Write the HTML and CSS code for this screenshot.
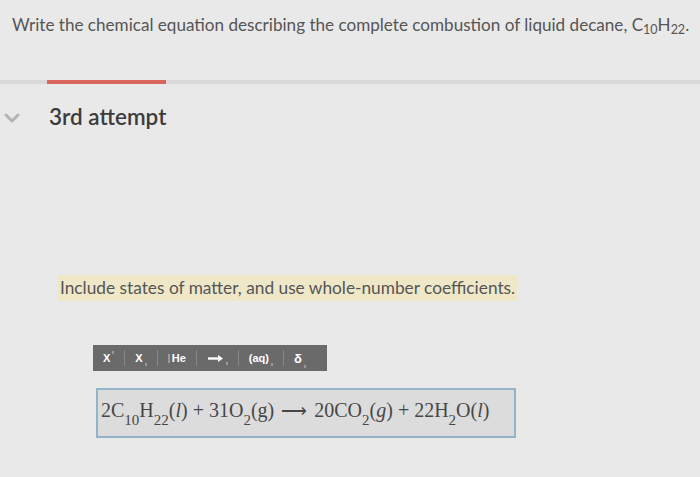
FILE: index.html
```html
<!DOCTYPE html>
<html>
<head>
<meta charset="utf-8">
<link rel="stylesheet" href="styles.css">
</head>
<body>
<div class="page">
  <div class="question">Write the chemical equation describing the complete combustion of liquid decane, C<sub>10</sub>H<sub>22</sub>.</div>
  <div class="progress"><div class="progress-fill"></div></div>
  <div class="attempt">
    <svg class="chev" width="16" height="10" viewBox="0 0 16 10"><path d="M2 2 L8 8 L14 2" fill="none" stroke="#b4b4b4" stroke-width="3" stroke-linecap="round" stroke-linejoin="round"/></svg>
    <span class="attempt-title">3rd attempt</span>
  </div>
  <div class="instr-row"><span class="instr">Include states of matter, and use whole-number coefficients.</span></div>
  <div class="toolbar">
    <span class="tb-item">X<span class="box sup"></span></span>
    <span class="sep"></span>
    <span class="tb-item">X<span class="box sub"></span></span>
    <span class="sep"></span>
    <span class="tb-item"><span class="box pre"></span>He</span>
    <span class="sep"></span>
    <span class="tb-item"><svg width="17" height="9" viewBox="0 0 17 9"><path d="M1 4.5 H13" stroke="#fff" stroke-width="2.4"/><path d="M11 1 L16 4.5 L11 8 Z" fill="#fff"/></svg><span class="box sub"></span></span>
    <span class="sep"></span>
    <span class="tb-item">(aq)<span class="box sub"></span></span>
    <span class="sep"></span>
    <span class="tb-item delta">δ<span class="box sub"></span></span>
  </div>
  <div class="eq-box">
    <span class="eq">2C<sub>10</sub>H<sub>22</sub>(<i>l</i>) + 31O<sub>2</sub>(g) <span class="yields">&#10230;</span> 20CO<sub>2</sub>(<i>g</i>) + 22H<sub>2</sub>O(<i>l</i>)</span>
  </div>
</div>
</body>
</html>
```
FILE: styles.css
```css
html, body {
  margin: 0;
  padding: 0;
  background: #e9e9e9;
}
.page {
  width: 700px;
  height: 477px;
  overflow: hidden;
  font-family: Lato, "Open Sans", sans-serif;
  color: #555;
}
.question {
  padding: 14px 0 0 12px;
  font-size: 17.1px;
  height: 54px;
  line-height: 22px;
}
.question sub {
  font-size: 12.5px;
  vertical-align: -3px;
  line-height: 0;
}
.progress {
  height: 4px;
  background: #d9d9d9;
  margin-top: 12px;
}
.progress-fill {
  width: 119px;
  height: 4px;
  margin-left: 47px;
  background: #d9655c;
}
.attempt {
  display: flex;
  align-items: center;
  margin-top: 20px;
  height: 24px;
}
.chev {
  margin-left: 4px;
  margin-top: 4px;
}
.attempt-title {
  margin-left: 29px;
  font-size: 22.5px;
  font-weight: 600;
  color: #3c3c3c;
}
.instr-row {
  margin-top: 147px;
  padding-left: 58px;
  height: 26px;
}
.instr {
  background: #efe8c8;
  font-size: 17.3px;
  line-height: 26px;
  padding: 0 2px;
  display: inline-block;
  color: #555;
}
.toolbar {
  margin: 44px 0 0 93px;
  width: 234px;
  height: 26px;
  background: #6a6a6a;
  display: flex;
  align-items: center;
  padding-left: 10px;
  box-sizing: border-box;
  font-family: "Liberation Sans", Arial, sans-serif;
  font-weight: bold;
  font-size: 11px;
  color: #fff;
}
.tb-item {
  display: inline-flex;
  align-items: center;
  position: relative;
}
.delta { font-size: 13px; }
.box {
  display: inline-block;
  width: 2px;
  height: 3px;
  background: #9a9a9a;
  margin-left: 2px;
}
.box.sup { align-self: flex-start; margin-top: -1px; }
.box.sub { align-self: flex-end; margin-bottom: -2px; }
.box.pre { margin: 0 2px 0 0; height: 9px; width: 2px; }
.sep {
  width: 1px;
  height: 16px;
  background: #888;
  margin: 0 10px;
}
.eq-box {
  margin: 17px 0 0 96px;
  width: 420px;
  height: 50px;
  box-sizing: border-box;
  border: 2px solid #93b3c9;
  background: #dcdcdc;
  display: flex;
  align-items: center;
  padding-left: 3px;
  padding-bottom: 6px;
}
.eq {
  font-family: "Liberation Serif", "Times New Roman", serif;
  font-size: 20px;
  color: #474747;
}
.eq sub {
  font-size: 15px;
  vertical-align: -8px;
  line-height: 0;
}
.eq i { font-style: italic; }
.yields { font-size: 18px; margin: 0 2px; }
```
